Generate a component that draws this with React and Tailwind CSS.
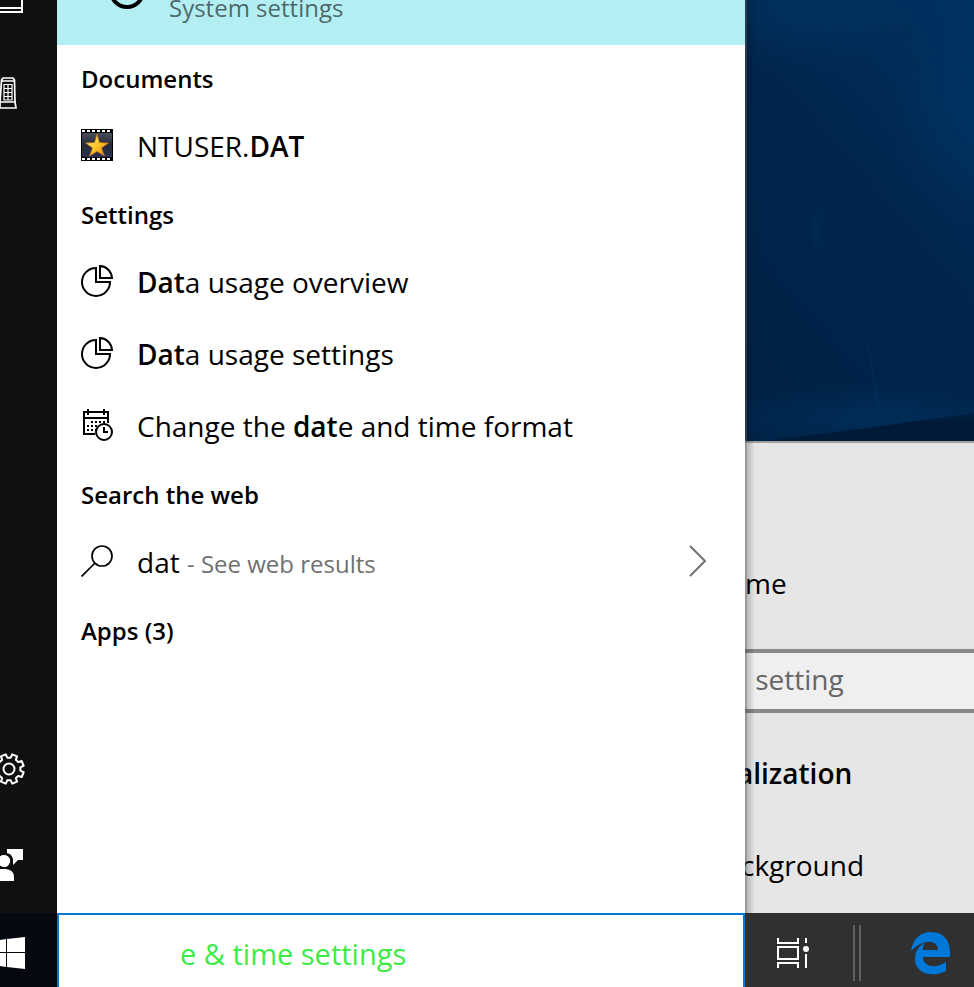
function Pie() {
  return (
    <svg className="size-8 shrink-0" viewBox="0 0 32 32" fill="none" stroke="black" strokeWidth="2">
      <path d="M15 3A14 14 0 1 0 29 17H15Z" />
      <path d="M19 1.1A12.500 12.500 0 0 1 31 13H19Z" />
    </svg>
  );
}

function Calendar() {
  return (
    <svg className="size-8 shrink-0" viewBox="0 0 32 32" fill="none" stroke="black" strokeWidth="2">
      <path d="M14 25H3V3H27V14M3 9H27M7 0V6M23 0V6" />
      <path d="M10 13H26M6 17H18M6 21H16" strokeDasharray="2 2" />
      <circle cx="23" cy="23" r="8" />
      <path d="M23 18V23H27" />
    </svg>
  );
}

function Movie() {
  return (
    <svg className="size-8 shrink-0" viewBox="0 0 32 32">
      <defs>
        <linearGradient id="film" x2="0" y2="1">
          <stop offset="0" stopColor="#4a4e5c" />
          <stop offset=".5" stopColor="#262a38" />
          <stop offset="1" stopColor="#2b3150" />
        </linearGradient>
        <linearGradient id="star" x2="1" y2="1">
          <stop offset="0" stopColor="#fff0a0" />
          <stop offset=".5" stopColor="#ffc928" />
          <stop offset="1" stopColor="#d87d13" />
        </linearGradient>
      </defs>
      <path d="M0 0H32V32H0Z" fill="black" />
      <path d="M1 4H31V28H1Z" fill="url(#film)" />
      <path d="M1 2H31M1 30H31" stroke="white" strokeWidth="2" strokeDasharray="3 2" />
      <path d="M16 5 18.500 13.500 27.500 14 20.500 19 23.500 27 16 22.500 8.500 27 11.500 19 4.500 14 13.500 13.500Z" fill="url(#star)" stroke="#b5651a" strokeWidth=".7" />
    </svg>
  );
}

function SearchGlyph() {
  return (
    <svg className="size-8 shrink-0" viewBox="0 0 32 32" fill="none" stroke="black" strokeWidth="1.700">
      <circle cx="21" cy="11" r="10" />
      <path d="M14 18 .5 31.500" />
    </svg>
  );
}

const Heading = ({ children }) => (
  <h2 className="flex h-16 items-center px-6 pt-1 text-2xl font-semibold">{children}</h2>
);

const Result = ({ icon, children, arrow }) => (
  <button className="flex h-18 w-full items-center gap-6 px-6 text-left text-[28px]">
    {icon}
    <span className="flex-1 pt-0.5 whitespace-nowrap">{children}</span>
    {arrow && (
      <svg className="mr-3 h-8 w-5" viewBox="0 0 20 32" fill="none" stroke="#707070" strokeWidth="2">
        <path d="M1 1 16 16 1 31" />
      </svg>
    )}
  </button>
);

// Outline of an eight-toothed cog centred on (cx, cy).
function cogPoints(cx, cy) {
  const points = [];
  for (let tooth = 0; tooth < 8; tooth++) {
    const middle = 22.5 + tooth * 45;
    for (const [offset, radius] of [[-14, 11.5], [-10, 15], [10, 15], [14, 11.5]]) {
      const angle = ((middle + offset) * Math.PI) / 180;
      points.push(`${cx + radius * Math.sin(angle)},${cy - radius * Math.cos(angle)}`);
    }
  }
  return points.join(" ");
}

function Rail() {
  return (
    <nav className="flex w-[57px] shrink-0 flex-col bg-[#101010] text-white">
      <button aria-label="Computer" className="h-13">
        <svg className="h-13 w-8" viewBox="0 0 32 52" fill="none" stroke="currentColor" strokeWidth="2">
          <path d="M0 8H22V0M0 12H22V8" />
        </svg>
      </button>
      <button aria-label="Remote" className="h-20">
        <svg className="h-20 w-8" viewBox="0 0 32 80" fill="none" stroke="currentColor">
          <path d="M1.500 28 3 26H13L14.500 28 15 50 16 56H0V51L1.500 28ZM2 29H14M1 50H15" strokeWidth="1.700" />
          <path d="M3.500 32.500H12.500M3.500 36.500H12.500M3.500 40.500H12.500M3.500 44.500H12.500M3.500 48H12.500M4 32V48M8 32V48M12 32V48" strokeWidth="1.200" />
        </svg>
      </button>
      <div className="flex-1" />
      <button aria-label="Settings" className="h-24">
        <svg className="h-24 w-8" viewBox="0 0 32 96" fill="none" stroke="currentColor" strokeWidth="2">
          <circle cx="9" cy="48" r="5.500" />
          <polygon points={cogPoints(9, 48)} strokeLinejoin="round" />
        </svg>
      </button>
      <button aria-label="Feedback" className="h-24">
        <svg className="h-24 w-8" viewBox="0 0 32 96" fill="currentColor">
          <path d="M7 32H23V43H18L13 48V43C13 40 11 37 7 36Z" />
          <circle cx="4" cy="44" r="6.300" />
          <path d="M0 52H6Q14 53 14 60V64H0Z" />
          <circle cx="4" cy="44" r="7" fill="none" stroke="#101010" strokeWidth="1.400" />
        </svg>
      </button>
    </nav>
  );
}

function Wallpaper() {
  return (
    <svg className="min-h-0 w-full flex-1" viewBox="0 0 229 441" preserveAspectRatio="none">
      <defs>
        <linearGradient id="sky" x1="1" x2=".4" y2="1">
          <stop offset="0" stopColor="#003263" />
          <stop offset=".5" stopColor="#00264c" />
          <stop offset="1" stopColor="#002347" />
        </linearGradient>
        <radialGradient id="glow">
          <stop offset="0" stopColor="#003868" stopOpacity=".5" />
          <stop offset="1" stopColor="#003868" stopOpacity="0" />
        </radialGradient>
        <linearGradient id="floor" x2="0" y2="1">
          <stop offset="0" stopColor="#001a38" stopOpacity=".5" />
          <stop offset=".3" stopColor="#001a38" />
        </linearGradient>
      </defs>
      <path d="M0 0H229V441H0Z" fill="url(#sky)" />
      <ellipse cx="229" cy="110" rx="80" ry="110" fill="url(#glow)" />
      <ellipse cx="50" cy="10" rx="110" ry="60" fill="url(#glow)" />
      <ellipse cx="72" cy="230" rx="9" ry="26" fill="url(#glow)" opacity=".6" />
      <ellipse cx="130" cy="418" rx="160" ry="30" fill="url(#glow)" />
      <path d="M90 255Q120 310 130 400L137 415Q128 340 90 255Z" fill="#003868" opacity=".25" />
      <path d="M20 441 130 427 229 413V441Z" fill="url(#floor)" />
    </svg>
  );
}

function SettingsWindow() {
  return (
    <section className="h-[472px] shrink-0 overflow-hidden border-t-2 border-[#a0a0a0] bg-[#e6e6e6] text-[28px] whitespace-nowrap">
      <div className="mt-26 flex h-18 items-center">me</div>
      <input aria-label="Find a setting" readOnly defaultValue=" setting" className="mt-[30px] h-16 w-full border-y-4 border-[#888] bg-[#efefef] pl-[3px] pb-1 text-[#666] outline-none" />
      <h2 className="-ml-2 mt-5 flex h-20 items-center font-semibold">alization</h2>
      <div className="-ml-1 mt-4 flex h-18 items-center">ckground</div>
    </section>
  );
}

export default function App() {
  return (
    <div className="flex h-screen flex-col overflow-hidden bg-white font-['Open_Sans','Noto_Sans',sans-serif] text-black">
      <div className="flex min-h-0 flex-1">
        <Rail />
        <main className="w-[688px] shrink-0 overflow-hidden bg-white">
          <div className="flex h-[45px] gap-6 overflow-hidden bg-[#b3eff2] pl-12 text-2xl text-[#4f696b]">
            <svg className="h-[45px] w-10 shrink-0" viewBox="0 0 40 45" fill="none" stroke="black" strokeWidth="4">
              <circle cx="22" cy="-9" r="16" />
            </svg>
            <span className="-mt-2">System settings</span>
          </div>
          <Heading>Documents</Heading>
          <Result icon={<Movie />}>NTUSER.<b className="font-semibold">DAT</b></Result>
          <Heading>Settings</Heading>
          <Result icon={<Pie />}><b className="font-semibold">Dat</b>a usage overview</Result>
          <Result icon={<Pie />}><b className="font-semibold">Dat</b>a usage settings</Result>
          <Result icon={<Calendar />}>Change the <b className="font-semibold">dat</b>e and time format</Result>
          <Heading>Search the web</Heading>
          <Result icon={<SearchGlyph />} arrow>dat <span className="text-2xl text-[#707070]">- See web results</span></Result>
          <Heading>Apps (3)</Heading>
        </main>
        <div className="relative flex min-w-0 flex-1 flex-col">
          <Wallpaper />
          <SettingsWindow />
          <div className="absolute inset-y-0 left-0 w-2.5 border-l-2 border-[#525252]/50 bg-linear-to-r from-black/20 to-transparent" />
        </div>
      </div>
      <footer className="flex h-[74px] shrink-0 overflow-hidden bg-[#303030]">
        <button aria-label="Start" className="w-[57px] shrink-0 bg-[#050a10]">
          <svg className="h-20 w-8" viewBox="0 0 32 80" fill="white">
            <path d="M0 27 6 26V39H0ZM7 26 25 24V39H7ZM0 40H6V54L0 53ZM7 40H25V56L7 54Z" />
          </svg>
        </button>
        <input aria-label="Search" readOnly defaultValue="e & time settings" className="h-20 w-[688px] shrink-0 border-2 border-[#0078d7] bg-white pl-[121px] text-[29px] text-[#3cec46] outline-none" />
        <button aria-label="Task view" className="ml-7">
          <svg className="h-20 w-10" viewBox="0 0 40 80" fill="none" stroke="white" strokeWidth="2">
            <path d="M5 25V30H25V25M5 34H25V46H5ZM5 55V50H25V55M33 25V30M33 41V55" />
            <circle cx="33" cy="36" r="3" fill="white" stroke="none" />
          </svg>
        </button>
        <div className="ml-10 mt-3 h-14 w-2 shrink-0 border-x-2 border-[#606060]" />
        <button aria-label="Edge" className="ml-12">
          <svg className="h-20 w-11" viewBox="0 0 44 80" fill="#0078d7">
            <path d="M2 38C4 25 12 19 22 19c13 0 19 9 19 20v5H14c0 10 13 12 23 5v9c-13 7-31 3-31-12 0-9 5-14 10-16-2 3-2 4-2 7h15c0-10-14-12-27 1Z" />
          </svg>
        </button>
      </footer>
    </div>
  );
}
